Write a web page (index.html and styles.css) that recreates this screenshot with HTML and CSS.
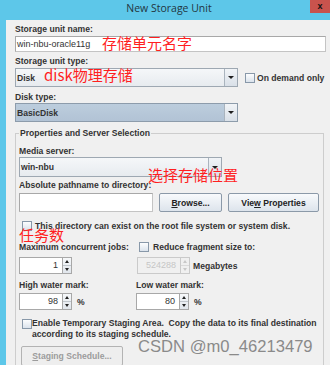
FILE: index.html
```html
<!DOCTYPE html>
<html>
<head>
<meta charset="utf-8">
<link rel="stylesheet" href="styles.css">
</head>
<body>
<div class="window">
  <div class="titlebar">
    <span></span>
    <span class="title">New Storage Unit</span>
    <span class="close">x</span>
  </div>
  <div class="content">
    <div class="label">Storage unit name:</div>
    <div class="field name mt2">win-nbu-oracle11g</div>
    <div class="label mt4">Storage unit type:</div>
    <div class="typerow mt2">
      <div class="combo disk"><span class="val">Disk</span><span class="drop"></span></div>
      <div class="check demand"><span class="box"></span><span class="label">On demand only</span></div>
    </div>
    <div class="label mt5">Disk type:</div>
    <div class="combo disk selected mt1"><span class="val">BasicDisk</span><span class="drop"></span></div>

    <fieldset class="group">
      <legend>Properties and Server Selection</legend>
      <div class="label mt8">Media server:</div>
      <div class="combo server mt1"><span class="val">win-nbu</span><span class="drop"></span></div>
      <div class="label mt3">Absolute pathname to directory:</div>
      <div class="pathrow mt3">
        <div class="field path"></div>
        <div class="button browse"><span><u>B</u>rowse...</span></div>
        <div class="button view"><span>Vie<u>w</u> Properties</span></div>
      </div>
      <div class="check root"><span class="box"></span><span class="label">This directory can exist on the root file system or system disk.</span></div>

      <div class="opts">
        <div class="label">Maximum concurrent jobs:</div>
        <div class="check reduce"><span class="box"></span><span class="label">Reduce fragment size to:</span></div>

        <div class="spinrow r2">
          <div class="spin"><span class="num">1</span><span class="arrows"><span class="up"></span><span class="down"></span></span></div>
        </div>
        <div class="spinrow r2 shift">
          <div class="spin disabled"><span class="num">524288</span><span class="arrows"><span class="up"></span><span class="down"></span></span></div>
          <span class="label unit">Megabytes</span>
        </div>

        <div class="label r3">High water mark:</div>
        <div class="label r3">Low water mark:</div>

        <div class="spinrow r4">
          <div class="spin"><span class="num">98</span><span class="arrows"><span class="up"></span><span class="down"></span></span></div>
          <span class="label pct">%</span>
        </div>
        <div class="spinrow r4">
          <div class="spin"><span class="num">80</span><span class="arrows"><span class="up"></span><span class="down"></span></span></div>
          <span class="label pct">%</span>
        </div>
      </div>

      <div class="check staging"><span class="box"></span><span class="label">Enable Temporary Staging Area.&nbsp; Copy the data to its final destination<br>according to its staging schedule.</span></div>
      <div class="button disabled stagebtn"><span><u>S</u>taging Schedule...</span></div>
    </fieldset>

    <span class="note n1">存储单元名字</span>
    <span class="note n2">disk物理存储</span>
    <span class="note n3">选择存储位置</span>
    <span class="note n4">任务数</span>
    <span class="watermark">CSDN @m0_46213479</span>
  </div>
</div>
</body>
</html>
```
FILE: styles.css
```css
* { box-sizing: border-box; }
html, body { margin: 0; padding: 0; }
body {
  width: 330px;
  height: 365px;
  overflow: hidden;
  background: #5dc7e9;
  font-family: "Liberation Sans", Arial, sans-serif;
}
.window { display: flex; flex-direction: column; height: 365px; }

.titlebar {
  height: 20px;
  display: grid;
  grid-template-columns: 1fr auto 1fr;
  align-items: start;
}
.title {
  font-family: "Open Sans", "Noto Sans", sans-serif;
  font-size: 10.5px;
  line-height: 16px;
  color: #23363f;
  padding-left: 8px;
}
.close {
  justify-self: end;
  width: 20px;
  height: 13px;
  background: #c9534d;
  color: #111;
  font-weight: bold;
  font-size: 9px;
  line-height: 12px;
  text-align: center;
}

.content {
  flex: 1;
  margin-left: 6px;
  background: #f0f0f0;
  padding: 4px 4px 0 9px;
  position: relative;
  overflow: hidden;
}

.label {
  font-weight: bold;
  font-size: 8.6px;
  line-height: 10px;
  color: #333;
  white-space: nowrap;
}
.mt1 { margin-top: 1px; }
.mt2 { margin-top: 2px; }
.mt3 { margin-top: 3px; }
.mt4 { margin-top: 4px; }
.mt5 { margin-top: 5px; }
.mt8 { margin-top: 8px; }

.field {
  background: #fff;
  border: 1px solid #a8a8a8;
  border-right-color: #c4c4c4;
  border-bottom-color: #c4c4c4;
  font-size: 9px;
  color: #333;
  padding-left: 1px;
  display: flex;
  align-items: center;
}
.name { height: 16px; }

.typerow { display: flex; align-items: center; }

.combo {
  display: flex;
  height: 19px;
  border: 1px solid #9ea8b2;
}
.combo .val {
  flex: 1;
  display: flex;
  align-items: center;
  padding-left: 1px;
  font-weight: bold;
  font-size: 8.6px;
  color: #333;
  background: linear-gradient(#f5f7f9, #e7ebef);
}
.combo .drop {
  width: 13px;
  border-left: 1px solid #aab4be;
  background: linear-gradient(#f1f4f7, #d9e0e8);
  display: flex;
  align-items: center;
  justify-content: center;
}
.combo .drop::after {
  content: "";
  border-left: 3px solid transparent;
  border-right: 3px solid transparent;
  border-top: 3px solid #1e1e1e;
}
.disk { width: 223px; }
.selected { border-color: #8d9cab; }
.selected .val { background: linear-gradient(#bccddd, #b2c3d5); }
.server { width: 203px; height: 20px; }

.check { display: flex; align-items: center; }
.box {
  width: 10px;
  height: 10px;
  flex: none;
  border: 1px solid #8898a9;
  background: linear-gradient(#fcfdfe, #dbe3ec);
}
.demand { margin-left: 7px; gap: 2px; }

.group {
  margin: 6px 2px 0 0;
  padding: 0 0 0 3px;
  border: 1px solid #cdcdcd;
  min-height: 260px;
}
.group legend {
  font-weight: bold;
  font-size: 8.6px;
  line-height: 10px;
  color: #333;
  padding: 0 1px;
}

.pathrow { display: flex; gap: 6px; }
.path { width: 134px; height: 19px; }
.button {
  height: 19px;
  border: 1px solid #8b99a8;
  border-radius: 2px;
  background: linear-gradient(#f8fafc, #dde4ec);
  font-weight: bold;
  font-size: 8.6px;
  color: #222;
  display: flex;
  align-items: center;
  justify-content: center;
  white-space: nowrap;
}
.browse { width: 63px; }
.view { width: 91px; }

.root { margin-top: 8px; height: 11px; gap: 3px; padding-left: 3px; }

.opts {
  display: grid;
  grid-template-columns: 117px 1fr;
  margin-top: 11px;
  align-items: center;
}
.reduce { gap: 4px; padding-left: 3px; }
.r2 { margin-top: 5px; }
.r3 { margin-top: 6px; }
.r4 { margin-top: 3px; }
.spinrow { display: flex; align-items: center; }
.shift { padding-left: 1px; }
.spin { display: flex; height: 17px; }
.spin .num {
  width: 44px;
  background: #fff;
  border: 1px solid #a8a8a8;
  font-size: 9px;
  color: #333;
  text-align: right;
  padding-right: 4px;
  line-height: 15px;
}
.spin .arrows {
  width: 9px;
  display: flex;
  flex-direction: column;
  border: 1px solid #a8a8a8;
  border-left: 0;
  background: linear-gradient(#f6f8fa, #e1e6ec);
}
.arrows span {
  flex: 1;
  display: flex;
  align-items: center;
  justify-content: center;
}
.arrows .up { border-bottom: 1px solid #c0c6cc; }
.arrows .up::after {
  content: "";
  border-left: 2px solid transparent;
  border-right: 2px solid transparent;
  border-bottom: 3px solid #222;
}
.arrows .down::after {
  content: "";
  border-left: 2px solid transparent;
  border-right: 2px solid transparent;
  border-top: 3px solid #222;
}
.spin.disabled .num { background: #f0f0f0; border-color: #cacaca; color: #c6c6c6; }
.spin.disabled .arrows { background: #f0f0f0; border-color: #cacaca; }
.spin.disabled .arrows .up { border-bottom-color: #dadada; }
.spin.disabled .arrows .up::after { border-bottom-color: #c8c8c8; }
.spin.disabled .arrows .down::after { border-top-color: #c8c8c8; }
.unit { margin-left: 3px; }
.pct { margin-left: 5px; }

.staging {
  margin-top: 8px;
  align-items: flex-start;
  padding-left: 3px;
}
.staging .box { margin-top: 1px; width: 10px; }
.staging .label { line-height: 11px; }
.stagebtn {
  margin: 6px 0 0 2px;
  width: 102px;
  height: 20px;
}
.button.disabled {
  border-color: #b3b3b3;
  background: #eeeeee;
  color: #9c9c9c;
}

.note {
  position: absolute;
  font-family: "Noto Sans CJK SC", sans-serif;
  font-size: 15px;
  line-height: 15px;
  color: #ff1f1f;
  white-space: nowrap;
}
.n1 { left: 96px; top: 15px; }
.n2 { left: 38px; top: 47px; }
.n3 { left: 142px; top: 147px; }
.n4 { left: 13px; top: 207px; }
.watermark {
  position: absolute;
  left: 132px;
  top: 318px;
  font-family: "Liberation Sans", Arial, sans-serif;
  font-size: 16.6px;
  line-height: 17px;
  color: #8a8a8a;
  white-space: nowrap;
}
```
